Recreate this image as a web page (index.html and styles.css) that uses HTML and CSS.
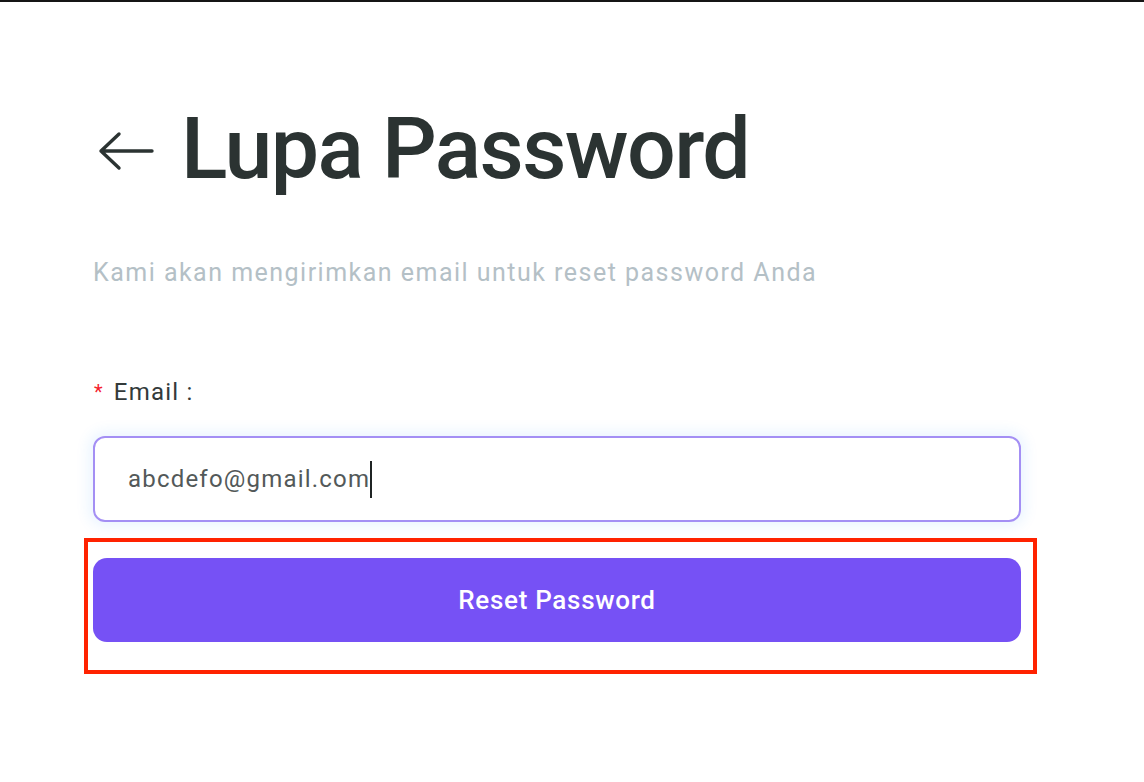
FILE: index.html
```html
<!DOCTYPE html>
<html lang="id">
<head>
<meta charset="utf-8">
<title>Lupa Password</title>
<link rel="stylesheet" href="styles.css">
</head>
<body>
<div class="page">
  <div class="header">
    <svg class="back" width="56" height="40" viewBox="0 0 56 40" aria-hidden="true">
      <path d="M3 20 H54 M21 3 L3 20 L21 37" fill="none" stroke="#2b3332" stroke-width="3.4" stroke-linecap="round" stroke-linejoin="round"/>
    </svg>
    <h1 class="title">Lupa Password</h1>
  </div>
  <p class="subtitle">Kami akan mengirimkan email untuk reset password Anda</p>
  <form class="form">
    <label class="label"><span class="req">*</span>Email :</label>
    <div class="input"><span class="value">abcdefo@gmail.com</span><span class="caret"></span></div>
    <div class="btn-wrap">
      <button type="button" class="btn">Reset Password</button>
      <div class="highlight"></div>
    </div>
  </form>
</div>
</body>
</html>
```

FILE: styles.css
```css
* { box-sizing: border-box; }
html, body { margin: 0; padding: 0; background: #ffffff; }
body {
  font-family: Roboto, "Noto Sans", "Liberation Sans", sans-serif;
  border-top: 2px solid #151515;
  min-height: 782px;
}
.page {
  width: 928px;
  margin-left: 93px;
  padding-top: 97px;
}
.header {
  display: flex;
  align-items: center;
  height: 100px;
}
.back {
  margin-left: 5px;
  margin-right: 27px;
  flex: none;
  position: relative;
  top: 2px;
}
.title {
  margin: 0;
  font-size: 86px;
  line-height: 100px;
  font-weight: 500;
  color: #2b3332;
  letter-spacing: -1.6px;
}
.subtitle {
  margin: 59px 0 0 0;
  font-size: 25px;
  line-height: 30px;
  color: #b4c0c6;
  letter-spacing: 1.48px;
}
.form {
  display: flex;
  flex-direction: column;
  margin-top: 89px;
}
.label {
  font-size: 24px;
  line-height: 30px;
  color: #333a3a;
  display: flex;
  align-items: flex-start;
  letter-spacing: 1.2px;
}
.req {
  color: #f5222d;
  font-size: 20px;
  margin: 0 10px 0 1px;
}
.input {
  margin-top: 29px;
  height: 86px;
  border: 2px solid #a48ff4;
  border-radius: 12px;
  box-shadow: 0 0 14px 4px rgba(40, 150, 255, 0.10);
  display: flex;
  align-items: center;
  padding-left: 33px;
  font-size: 24px;
  color: #535959;
  letter-spacing: 1.2px;
}
.caret {
  display: inline-block;
  width: 2px;
  height: 37px;
  background: #1f2424;
  margin-left: 0;
}
.btn-wrap {
  position: relative;
  margin-top: 36px;
}
.btn {
  width: 100%;
  height: 84px;
  border: none;
  border-radius: 14px;
  background: #7651f5;
  color: #ffffff;
  font-family: Roboto, "Noto Sans", sans-serif;
  font-size: 26px;
  font-weight: 500;
  letter-spacing: 0.7px;
  display: block;
  padding: 0;
}
.highlight {
  position: absolute;
  top: -20px;
  left: -9px;
  right: -16px;
  bottom: -32px;
  border: 4px solid #ff2200;
  pointer-events: none;
}
```
